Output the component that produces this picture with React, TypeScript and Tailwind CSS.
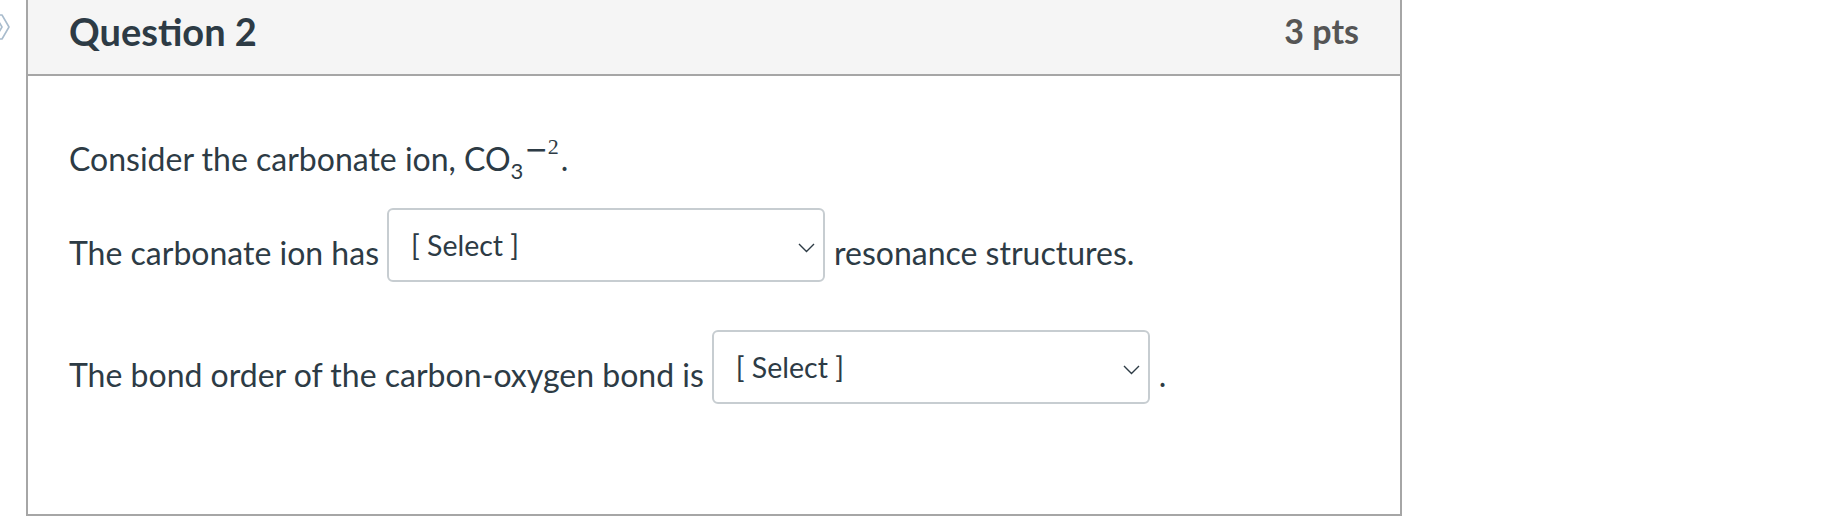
import React from "react";

function SelectBox({ className = "" }: { className?: string }) {
  return (
    <div
      className={`relative flex items-center h-[74px] w-[438px] shrink-0 rounded-[6px] border-2 border-[#c7cdd1] bg-white pl-[22px] ${className}`}
    >
      <span className="text-[28.5px] leading-none text-[#2d3b45]">[ Select ]</span>
      <svg
        className="absolute right-[8px] top-[33px]"
        width="17"
        height="10"
        viewBox="0 0 17 10"
        fill="none"
      >
        <path d="M1 1 L8.5 8.5 L16 1" stroke="#2d3b45" strokeWidth="1.4" />
      </svg>
    </div>
  );
}

export default function App() {
  return (
    <div className="relative w-[1834px] h-[516px] overflow-hidden bg-white font-['Lato',_'Liberation_Sans',_sans-serif] text-[#2d3b45]">
      {/* question flag, cut off at the page edge */}
      <svg className="absolute left-0 top-[14px]" width="12" height="26" viewBox="0 0 12 26" fill="none">
        <path d="M-5 1 L2 1 L9 13 L2 25 L-5 25 L2 13 Z" stroke="#a9bccd" strokeWidth="1.6" strokeLinejoin="round" />
      </svg>

      <div className="ml-[26px] w-[1376px] h-[516px] border-x-2 border-b-2 border-[#a6a6a6] flex flex-col">
        {/* header */}
        <div className="h-[76px] shrink-0 bg-[#f5f5f5] border-b-2 border-[#a6a6a6] flex items-center justify-between px-[41px] pb-[12px]">
          <h2 className="text-[38px] leading-none font-bold text-[#2d3b45]">Question 2</h2>
          <div className="text-[34px] leading-none font-bold text-[#555555]">3 pts</div>
        </div>

        {/* body */}
        <div className="px-[41px] pt-[59px] text-[32px]">
          <p className="leading-[48px]">
            Consider the carbonate ion, CO
            <span className="relative top-[8px] text-[22px] leading-none">3</span>
            <span className="relative top-[-12px] ml-[1px] font-['DejaVu_Sans',_sans-serif] text-[28px] leading-none">−</span>
            <span className="relative top-[-17px] font-['Liberation_Serif',_serif] text-[22px] leading-none">2</span>
            <span className="ml-[2px]">.</span>
          </p>

          <div className="mt-[25px] flex items-center gap-[8px]">
            <span className="pt-[16px] leading-[40px]">The carbonate ion has</span>
            <SelectBox className="mr-[1px]" />
            <span className="pt-[16px] leading-[40px]">resonance structures.</span>
          </div>

          <div className="mt-[48px] flex items-center gap-[8px]">
            <span className="pt-[16px] leading-[40px]">The bond order of the carbon-oxygen bond is</span>
            <SelectBox className="mr-[1px]" />
            <span className="pt-[16px] leading-[40px]">.</span>
          </div>
        </div>
      </div>
    </div>
  );
}
